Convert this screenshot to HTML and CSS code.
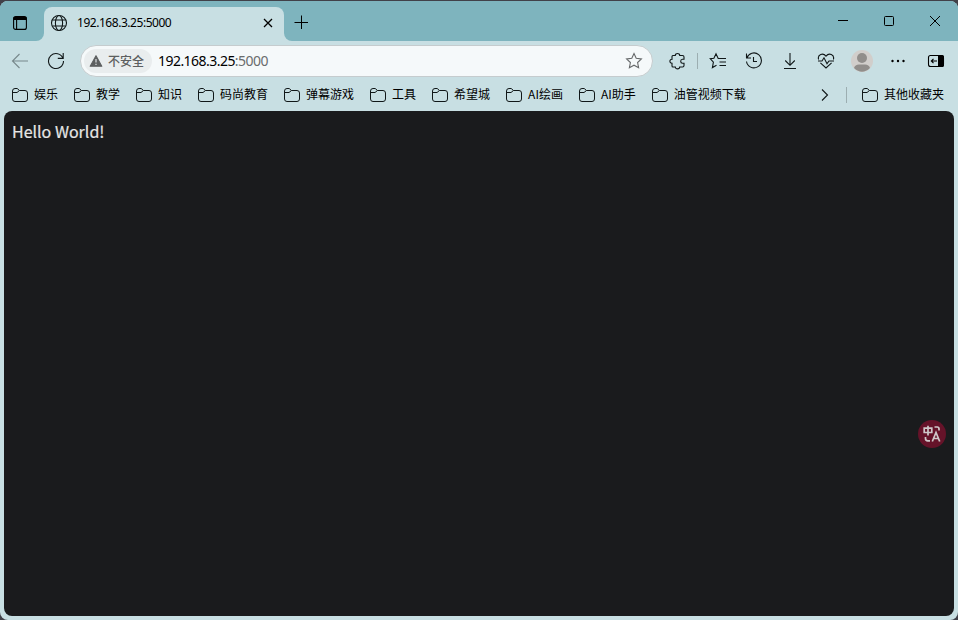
FILE: index.html
```html
<!DOCTYPE html>
<html lang="zh-CN">
<head>
    <meta charset="UTF-8">
    <meta name="viewport" content="width=device-width, initial-scale=1.0">
    <title>192.168.3.25:5000</title>
    <link rel="stylesheet" href="styles.css">
</head>
<body>
    <!-- Shared folder icon -->
    <svg class="sprite">
        <symbol id="folder" viewBox="0 0 16 14">
            <path d="M.5 3Q.5 .5 3 .5H5.2L7.5 2.5H13Q15.5 2.5 15.5 5V11Q15.5 13.5 13 13.5H3Q.5 13.5 .5 11ZM.5 4.5H5L7.5 2.5"/>
        </symbol>
    </svg>

    <div class="window">
        <!-- Tab strip -->
        <header class="tab-strip">
            <div class="tab-actions">
                <svg width="16" height="16" viewBox="0 0 16 16"><rect x="1.6" y="1.6" width="12.8" height="12.8" rx="2"/><path d="M1.6 3.5H14.4" stroke-width="3.2"/><path d="M4.6 4V14"/></svg>
            </div>
            <div class="tab">
                <svg class="globe" width="18" height="18" viewBox="0 0 18 18"><circle cx="9" cy="9" r="7.5"/><ellipse cx="9" cy="9" rx="3.6" ry="7.5"/><path d="M2.3 6H15.7M2.3 12H15.7"/></svg>
                <span class="tab-title">192.168.3.25:5000</span>
                <svg class="tab-close" width="10" height="10" viewBox="0 0 10 10"><path d="M1 1L9 9M9 1L1 9"/></svg>
            </div>
            <div class="new-tab">
                <svg width="14" height="14" viewBox="0 0 14 14"><path d="M7.5 .5V14M.5 7.5H14"/></svg>
            </div>
            <div class="window-controls">
                <span><svg width="12" height="12" viewBox="0 0 12 12"><path d="M1 5.5H11"/></svg></span>
                <span><svg width="12" height="12" viewBox="0 0 12 12"><rect x="1.5" y="1.5" width="9" height="9" rx="1"/></svg></span>
                <span><svg width="12" height="12" viewBox="0 0 12 12"><path d="M1 1L11 11M11 1L1 11"/></svg></span>
            </div>
        </header>

        <!-- Toolbar -->
        <nav class="toolbar">
            <span class="tool back"><svg width="18" height="18" viewBox="0 0 18 18"><path d="M17 9H1.5M8.5 2L1.5 9L8.5 16"/></svg></span>
            <span class="tool"><svg width="18" height="18" viewBox="0 0 18 18"><path d="M16 6.3A7.5 7.5 0 1 0 16.5 9M16.2 1V6.4H10.8"/></svg></span>
            <div class="address-bar">
                <div class="security">
                    <svg width="14" height="14" viewBox="0 0 14 14"><path class="fill" d="M7 1.7L12.8 12.2H1.2Z"/><path class="mark" d="M7 5V8.6M7 9.8V11"/></svg>
                    <span>不安全</span>
                </div>
                <span class="url">192.168.3.25<span class="port">:5000</span></span>
                <svg class="favorite" width="18" height="18" viewBox="0 0 18 18"><path d="M9 1.5L11.2 6.2L16.4 6.9L12.6 10.5L13.6 15.7L9 13.2L4.4 15.7L5.4 10.5L1.6 6.9L6.8 6.2Z"/></svg>
            </div>
            <span class="tool extensions"><svg width="18" height="18" viewBox="0 0 18 18"><path d="M3.5 3.5H6.3C6.1 .9 10.9 .9 10.7 3.5H13.5Q15 3.5 15 5V7.2H13.5C11.1 7.2 11.1 11.2 13.5 11.2H15V13.5Q15 15 13.5 15H10.7C10.7 17.5 6.3 17.5 6.3 15H4Q3 15 3 14V11.3C.2 11.5 .2 7.1 3 7.3V4.5Q3 3.5 4 3.5"/></svg></span>
            <span class="divider"></span>
            <span class="tool"><svg width="18" height="18" viewBox="0 0 18 18"><path d="M9.7 6.5H9.2L7 1.7L4.9 6.2L1.2 6.7L4.4 10.2L3.4 15.6L7.5 13.3M9.2 6.5H17M10.5 10H17M10.5 13.5H17"/></svg></span>
            <span class="tool"><svg width="18" height="18" viewBox="0 0 18 18"><path d="M1.5 1.5V6H6M1.8 6A7.5 7.5 0 1 1 1.5 9.5M8.5 5V9.5H12"/></svg></span>
            <span class="tool"><svg width="18" height="18" viewBox="0 0 18 18"><path d="M9 1V13M4.2 8.5L9 13.3L13.8 8.5M3 16.5H15"/></svg></span>
            <span class="tool"><svg width="18" height="18" viewBox="0 0 18 18"><path d="M1.6 7.5C.2 2.5 6 .3 9 4.1C12 .3 17.8 2.5 16.4 7.5M3.4 10.8L9 16L14.6 10.8M1 9H5L7 5.8L10 11.7L12 9H17"/></svg></span>
            <span class="tool avatar"><svg width="22" height="22" viewBox="0 0 22 22"><circle cx="11" cy="11" r="11" fill="#d1cecb"/><circle cx="11" cy="8" r="5" fill="#918e8b"/><path d="M3 18Q4 14.5 8 14.5H14Q18 14.5 19 18Q11 25.5 3 18Z" fill="#918e8b"/></svg></span>
            <span class="tool dots"><svg width="16" height="4" viewBox="0 0 16 4"><circle cx="2.5" cy="2" r="1.2"/><circle cx="8" cy="2" r="1.2"/><circle cx="13.5" cy="2" r="1.2"/></svg></span>
            <span class="tool sidebar"><svg width="18" height="14" viewBox="0 0 18 14"><rect x="1.5" y="1.5" width="15" height="11" rx="2"/><path class="panel" d="M11 1H15Q17 1 17 3V11Q17 13 15 13H11Z"/><path d="M10 7H4.5M6.5 4.8L4.3 7L6.5 9.2"/></svg></span>
        </nav>

        <!-- Bookmarks bar -->
        <div class="bookmarks">
            <ul>
                <li><svg><use href="#folder"/></svg>娱乐</li>
                <li><svg><use href="#folder"/></svg>教学</li>
                <li><svg><use href="#folder"/></svg>知识</li>
                <li><svg><use href="#folder"/></svg>码尚教育</li>
                <li><svg><use href="#folder"/></svg>弹幕游戏</li>
                <li><svg><use href="#folder"/></svg>工具</li>
                <li><svg><use href="#folder"/></svg>希望城</li>
                <li><svg><use href="#folder"/></svg>AI绘画</li>
                <li><svg><use href="#folder"/></svg>AI助手</li>
                <li><svg><use href="#folder"/></svg>油管视频下载</li>
            </ul>
            <div class="more">
                <svg class="chevron" width="8" height="14" viewBox="0 0 8 14"><path d="M1 1.5L6.5 7L1 12.5"/></svg>
                <span class="divider"></span>
                <div class="other"><svg><use href="#folder"/></svg>其他收藏夹</div>
            </div>
        </div>

        <!-- Page content -->
        <main class="page">
            <p>Hello World!</p>
            <div class="translate">
                <svg width="18" height="18" viewBox="0 0 18 18"><path d="M1.2 3.2H8.8V7.5H1.2ZM5 .8V10.5M11.5 2H14.2Q16 2 16 4V5.5M2.5 12V13.5Q2.5 15.8 4.7 15.8H7M9.3 16.5L13 7.5L16.7 16.5M10.7 13.5H15.3"/></svg>
            </div>
        </main>
    </div>
</body>
</html>
```
FILE: styles.css
```css
* {
    box-sizing: border-box;
}

body {
    margin: 0;
    padding-top: 1px;
    height: 620px;
    overflow: hidden;
    background-color: #414149;
    color: #000;
    font-family: "Noto Sans", "Noto Sans CJK SC", sans-serif;
    font-size: 12px;
}

svg {
    display: block;
    flex: none;
    fill: none;
    stroke: #101718;
    stroke-width: 1.1;
}

.sprite {
    display: none;
}

.window {
    display: flex;
    flex-direction: column;
    height: 619px;
    padding-bottom: 4px;
    background-color: #c8dfe3;
    border-radius: 8px;
    overflow: hidden;
}

/* Tab strip */
.tab-strip {
    display: flex;
    height: 40px;
    background: linear-gradient(#c8dfe3, #c8dfe3) 36px 100% / 256px 8px no-repeat #7eb4be;
}

.tab-actions {
    display: flex;
    align-items: center;
    width: 44px;
    padding: 4px 0 0 12px;
    background-color: #7eb4be;
    border-bottom-right-radius: 8px;
}

.tab-actions svg {
    stroke: #000;
}

.tab {
    display: flex;
    align-items: center;
    width: 240px;
    margin-top: 6px;
    padding: 0 11px 2px 6px;
    background-color: #c8dfe3;
    border-radius: 8px 8px 0 0;
}

.tab-title {
    flex: 1;
    margin-left: 9px;
    padding-bottom: 2px;
    letter-spacing: -0.46px;
}

.tab-close {
    stroke: #000;
    stroke-width: 1.3;
}

.new-tab {
    flex: 1;
    padding: 14px 0 0 10px;
    background-color: #7eb4be;
    border-bottom-left-radius: 8px;
}

.new-tab svg,
.window-controls svg {
    stroke: #000;
    stroke-width: 1;
}

.window-controls {
    display: flex;
    background-color: #7eb4be;
}

.window-controls span {
    display: flex;
    justify-content: center;
    width: 46px;
    padding-top: 14px;
}

/* Toolbar */
.toolbar {
    display: flex;
    align-items: center;
    height: 40px;
    padding-left: 2px;
}

.tool {
    display: flex;
    justify-content: center;
    width: 36px;
}

.back svg {
    stroke: #77888b;
}

.address-bar {
    display: flex;
    align-items: center;
    width: 573px;
    height: 32px;
    margin-left: 6px;
    padding: 0 9px 0 3px;
    background-color: #f5f9fa;
    border: 1px solid #c5ccce;
    border-radius: 16px;
}

.security {
    display: flex;
    align-items: center;
    gap: 5px;
    width: 68px;
    height: 24px;
    padding-left: 5px;
    background-color: #e9edee;
    border-radius: 12px;
    color: #5d5f60;
    font-weight: 500;
}

.security .fill {
    fill: #5d5f60;
    stroke: #5d5f60;
    stroke-linejoin: round;
}

.security .mark {
    stroke: #e9edee;
}

.url {
    flex: 1;
    margin-left: 6px;
    padding-bottom: 2px;
    font-size: 14px;
    letter-spacing: -0.54px;
}

.port {
    color: #696c6d;
}

.favorite {
    stroke: #66696a;
}

.extensions {
    margin-left: 7px;
}

.divider {
    width: 1px;
    height: 16px;
    background-color: #9caeb1;
}

.toolbar .divider {
    margin: 0 2px 0 1px;
}

.avatar svg {
    stroke: none;
}

.dots svg {
    fill: #000;
    stroke: none;
}

.sidebar {
    margin-left: 2px;
}

.sidebar svg {
    stroke: #000;
}

.sidebar .panel {
    fill: #000;
    stroke: none;
}

/* Bookmarks bar */
.bookmarks {
    display: flex;
    justify-content: space-between;
    height: 30px;
    padding: 0 14px 4px 12px;
    font-family: "Noto Sans CJK SC", sans-serif;
    line-height: 26px;
    white-space: nowrap;
}

.bookmarks ul {
    display: flex;
    gap: 16px;
    margin: 0;
    padding: 0;
    list-style: none;
}

.bookmarks li,
.other {
    display: flex;
    align-items: center;
    gap: 6px;
}

.bookmarks li svg,
.other svg {
    width: 16px;
    height: 14px;
    margin-top: 2px;
    stroke-width: 1;
}

.more {
    display: flex;
    align-items: center;
}

.chevron {
    margin: 2px 17px 0 0;
}

.more .divider {
    margin-top: 2px;
}

.other {
    margin-left: 15px;
}

/* Page content */
.page {
    position: relative;
    flex: 1;
    margin: 0 4px;
    padding: 8px;
    background-color: #1a1b1d;
    border-radius: 8px;
}

.page p {
    margin: 0;
    color: #e6e6e6;
    font-family: "Noto Sans CJK SC", sans-serif;
    font-size: 16px;
    line-height: 24px;
    -webkit-text-stroke: 0.2px #e6e6e6;
}

/* Floating translate button */
.translate {
    position: absolute;
    top: 309px;
    right: 8px;
    display: flex;
    align-items: center;
    justify-content: center;
    width: 28px;
    height: 28px;
    background-color: #651329;
    border-radius: 50%;
}

.translate svg {
    stroke: #cfc8c9;
    stroke-width: 1.7;
}
```
